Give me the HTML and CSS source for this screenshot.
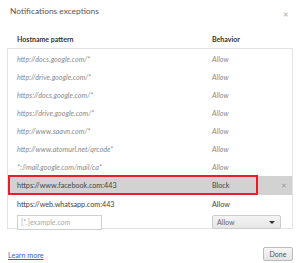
FILE: index.html
```html
<!DOCTYPE html>
<html lang="en">
<head>
    <meta charset="UTF-8">
    <title>Notifications exceptions</title>
    <link rel="stylesheet" href="styles.css">
</head>
<body>
    <div class="dialog">
        <div class="title-bar">
            <div class="title">Notifications exceptions</div>
            <span class="close">&#x2715;</span>
        </div>

        <div class="list-head">
            <span class="col-name">Hostname pattern</span>
            <span class="col-behavior">Behavior</span>
        </div>

        <div class="list">
            <div class="row policy"><span class="col-name">http://docs.google.com/*</span><span class="col-behavior">Allow</span></div>
            <div class="row policy"><span class="col-name">http://drive.google.com/*</span><span class="col-behavior">Allow</span></div>
            <div class="row policy"><span class="col-name">https://docs.google.com/*</span><span class="col-behavior">Allow</span></div>
            <div class="row policy"><span class="col-name">https://drive.google.com/*</span><span class="col-behavior">Allow</span></div>
            <div class="row policy"><span class="col-name">http://www.saavn.com/*</span><span class="col-behavior">Allow</span></div>
            <div class="row policy"><span class="col-name">http://www.atomurl.net/qrcode*</span><span class="col-behavior">Allow</span></div>
            <div class="row policy"><span class="col-name">*://mail.google.com/mail/ca*</span><span class="col-behavior">Allow</span></div>
            <div class="row selected"><span class="col-name">https://www.facebook.com:443</span><span class="col-behavior">Block</span><span class="remove">&#x2715;</span></div>
            <div class="row"><span class="col-name">https://web.whatsapp.com:443</span><span class="col-behavior">Allow</span></div>
            <div class="row new-row">
                <span class="col-name"><input class="pattern-input" type="text" placeholder="[*.]example.com"></span>
                <span class="col-behavior"><span class="select">Allow<span class="arrow"></span></span></span>
            </div>
        </div>

        <div class="footer">
            <a href="#" class="learn-more">Learn more</a>
            <button class="done">Done</button>
        </div>
    </div>
</body>
</html>
```

FILE: styles.css
```css
body {
    margin: 0;
    background: #ffffff;
    font-family: 'Lato', 'Open Sans', sans-serif;
    color: #333333;
}
.dialog {
    width: 300px;
    height: 263px;
    position: relative;
}
.title-bar {
    display: flex;
    justify-content: space-between;
    align-items: center;
    padding: 4px 11px 0 10px;
    height: 14px;
}
.title {
    font-size: 8.4px;
    color: #555555;
}
.close {
    font-size: 7px;
    color: #aaaaaa;
    margin-top: 6px;
}
.list-head {
    display: flex;
    font-size: 7px;
    font-weight: bold;
    color: #333333;
    padding: 17px 0 0 17px;
    height: 11px;
}
.list-head .col-name {
    width: 195px;
}
.list {
    margin: 2px 7px 0 7px;
    border: 1px solid #e2e2e2;
    height: 179px;
}
.row {
    display: flex;
    align-items: center;
    height: 18px;
    padding-left: 9px;
    font-size: 7.2px;
    color: #444444;
    position: relative;
}
.row:first-child {
    margin-top: 1px;
}
.row .col-name {
    width: 195px;
}
.policy {
    font-style: italic;
    color: #8a8a8a;
}
.selected {
    background: #d2d2d2;
    height: 19px;
}
.selected::after {
    content: '';
    position: absolute;
    left: 0;
    top: -1px;
    width: 246px;
    height: 16px;
    border: 2.5px solid #e81e2a;
}
.remove {
    position: absolute;
    right: 5px;
    font-size: 6.5px;
    color: #999999;
}
.new-row {
    height: 18px;
}
.pattern-input {
    width: 77px;
    height: 9px;
    padding: 2px 3px;
    border: 1px solid #cfcfcf;
    font-family: inherit;
    font-size: 7px;
    outline: none;
}
.pattern-input::placeholder {
    color: #aaaaaa;
}
.select {
    display: flex;
    justify-content: space-between;
    align-items: center;
    width: 58px;
    height: 12px;
    padding: 0 5px 0 4px;
    border: 1px solid #cccccc;
    border-radius: 2px;
    background: linear-gradient(#f4f4f4, #e6e6e6);
    font-size: 7px;
    color: #666666;
}
.arrow {
    width: 0;
    height: 0;
    border-left: 3px solid transparent;
    border-right: 3px solid transparent;
    border-top: 3px solid #333333;
}
.footer {
    display: flex;
    justify-content: space-between;
    align-items: center;
    padding: 18px 7px 0 8px;
}
.learn-more {
    font-size: 7.2px;
    color: #3366cc;
    text-decoration: underline;
    margin-top: 2px;
}
.done {
    font-family: inherit;
    font-size: 7px;
    color: #555555;
    width: 30px;
    height: 14px;
    padding: 0;
    border: 1px solid #bbbbbb;
    border-radius: 2px;
    background: linear-gradient(#f6f6f6, #e4e4e4);
}
```
